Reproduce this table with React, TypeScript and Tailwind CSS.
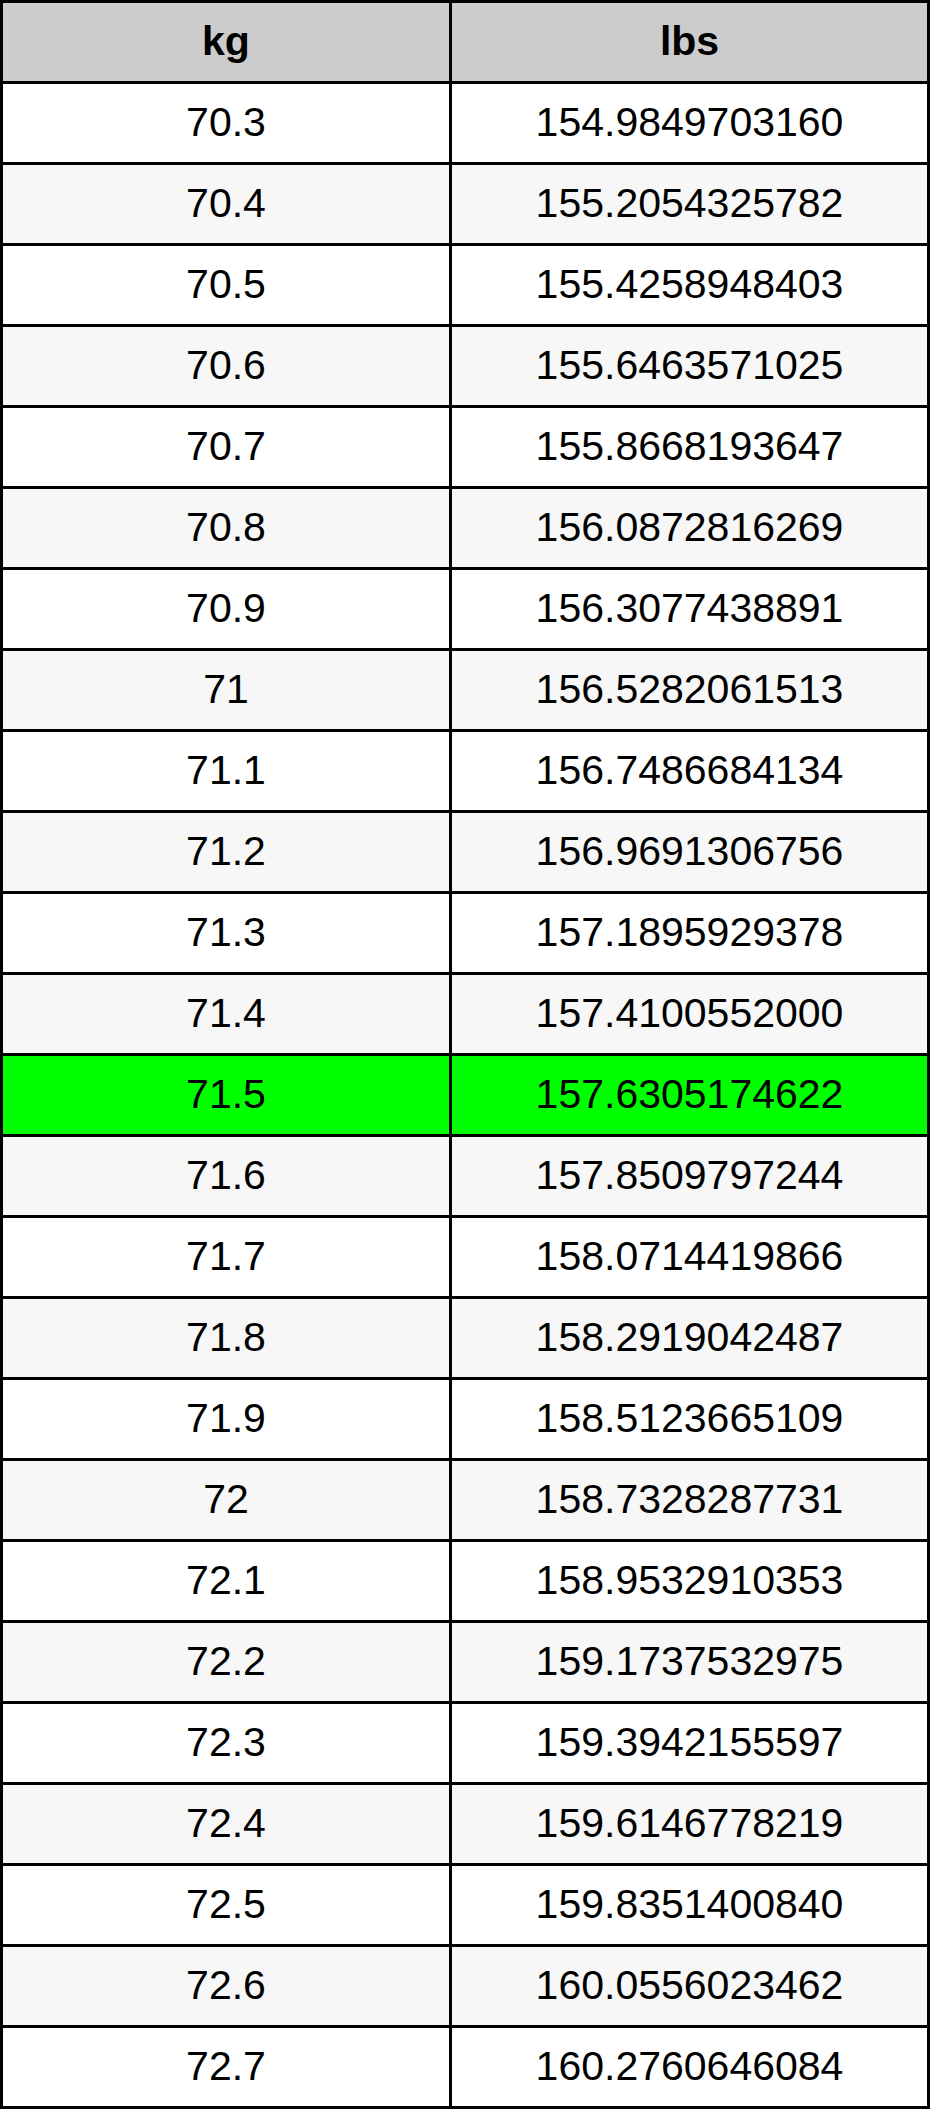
const rows: [string, string][] = [
  ['70.3', '154.9849703160'],
  ['70.4', '155.2054325782'],
  ['70.5', '155.4258948403'],
  ['70.6', '155.6463571025'],
  ['70.7', '155.8668193647'],
  ['70.8', '156.0872816269'],
  ['70.9', '156.3077438891'],
  ['71', '156.5282061513'],
  ['71.1', '156.7486684134'],
  ['71.2', '156.9691306756'],
  ['71.3', '157.1895929378'],
  ['71.4', '157.4100552000'],
  ['71.5', '157.6305174622'],
  ['71.6', '157.8509797244'],
  ['71.7', '158.0714419866'],
  ['71.8', '158.2919042487'],
  ['71.9', '158.5123665109'],
  ['72', '158.7328287731'],
  ['72.1', '158.9532910353'],
  ['72.2', '159.1737532975'],
  ['72.3', '159.3942155597'],
  ['72.4', '159.6146778219'],
  ['72.5', '159.8351400840'],
  ['72.6', '160.0556023462'],
  ['72.7', '160.2760646084'],
];

const cell =
  'h-[81px] flex items-center justify-center border-r-[3px] border-b-[3px] border-black';

export default function App() {
  return (
    <div
      className="w-[930px] min-h-[2115px] bg-white text-black text-[41px]"
      style={{ fontFamily: '"Liberation Sans", Arial, sans-serif' }}
    >
      <div className="grid grid-cols-[449px_478px] border-l-[3px] border-t-[3px] border-black">
        {/* Header */}
        <div className={`${cell} bg-[#cccccc] font-bold`}>kg</div>
        <div className={`${cell} bg-[#cccccc] font-bold`}>lbs</div>

        {rows.map(([kg, lbs], i) => {
          const bg =
            kg === '71.5' ? 'bg-[#00ff00]' : i % 2 === 1 ? 'bg-[#f7f7f7]' : 'bg-white';
          return (
            <div key={kg} className="contents">
              <div className={`${cell} ${bg}`}>{kg}</div>
              <div className={`${cell} ${bg}`}>{lbs}</div>
            </div>
          );
        })}
      </div>
    </div>
  );
}
